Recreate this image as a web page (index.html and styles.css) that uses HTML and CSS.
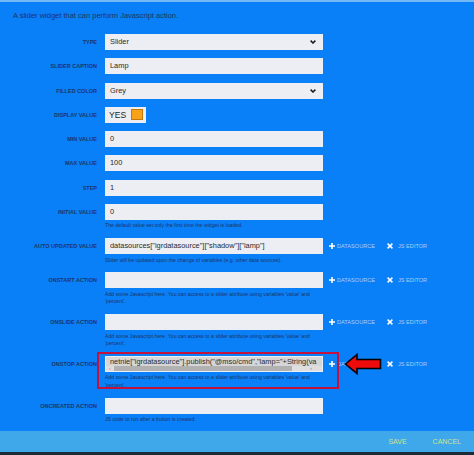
FILE: index.html
```html
<!DOCTYPE html>
<html>
<head>
<meta charset="utf-8">
<link rel="stylesheet" href="styles.css">
</head>
<body>
<div class="topline"></div>
<main class="panel">
  <p class="desc">A slider widget that can perform Javascript action.</p>

  <div class="row">
    <label class="lbl">TYPE</label>
    <div class="field select">Slider<svg class="chev" width="6" height="4" viewBox="0 0 6 4"><path d="M0.6 0.6L3 3L5.4 0.6" fill="none" stroke="#1a1a1a" stroke-width="1.5"/></svg></div>
  </div>
  <div class="row">
    <label class="lbl">SLIDER CAPTION</label>
    <div class="field">Lamp</div>
  </div>
  <div class="row">
    <label class="lbl">FILLED COLOR</label>
    <div class="field select">Grey<svg class="chev" width="6" height="4" viewBox="0 0 6 4"><path d="M0.6 0.6L3 3L5.4 0.6" fill="none" stroke="#1a1a1a" stroke-width="1.5"/></svg></div>
  </div>
  <div class="row">
    <label class="lbl">DISPLAY VALUE</label>
    <div class="toggle"><span class="yes">YES</span><span class="swatch"></span></div>
  </div>
  <div class="row">
    <label class="lbl">MIN VALUE</label>
    <div class="field">0</div>
  </div>
  <div class="row">
    <label class="lbl">MAX VALUE</label>
    <div class="field">100</div>
  </div>
  <div class="row">
    <label class="lbl">STEP</label>
    <div class="field">1</div>
  </div>
  <div class="row">
    <label class="lbl">INITIAL VALUE</label>
    <div class="field">0</div>
    <p class="help">The default value set only the first time the widget is loaded.</p>
  </div>
  <div class="row">
    <label class="lbl">AUTO UPDATED VALUE</label>
    <div class="field">datasources["igrdatasource"]["shadow"]["lamp"]</div>
    <div class="actions">
      <span class="act"><svg width="6" height="6" viewBox="0 0 6 6"><path d="M3 0V6M0 3H6" stroke="#fff" stroke-width="1.6"/></svg>DATASOURCE</span>
      <span class="act js"><svg width="6" height="6" viewBox="0 0 6 6"><path d="M0.6 0.6L5.4 5.4M5.4 0.6L0.6 5.4" stroke="#fff" stroke-width="1.5"/></svg>JS EDITOR</span>
    </div>
    <p class="help">Slider will be updated upon the change of variables (e.g. other data sources).</p>
  </div>
  <div class="row">
    <label class="lbl">ONSTART ACTION</label>
    <div class="field"></div>
    <div class="actions">
      <span class="act"><svg width="6" height="6" viewBox="0 0 6 6"><path d="M3 0V6M0 3H6" stroke="#fff" stroke-width="1.6"/></svg>DATASOURCE</span>
      <span class="act js"><svg width="6" height="6" viewBox="0 0 6 6"><path d="M0.6 0.6L5.4 5.4M5.4 0.6L0.6 5.4" stroke="#fff" stroke-width="1.5"/></svg>JS EDITOR</span>
    </div>
    <p class="help">Add some Javascript here. You can access to a slider attribute using variables 'value' and<br>'percent'.</p>
  </div>
  <div class="row">
    <label class="lbl">ONSLIDE ACTION</label>
    <div class="field"></div>
    <div class="actions">
      <span class="act"><svg width="6" height="6" viewBox="0 0 6 6"><path d="M3 0V6M0 3H6" stroke="#fff" stroke-width="1.6"/></svg>DATASOURCE</span>
      <span class="act js"><svg width="6" height="6" viewBox="0 0 6 6"><path d="M0.6 0.6L5.4 5.4M5.4 0.6L0.6 5.4" stroke="#fff" stroke-width="1.5"/></svg>JS EDITOR</span>
    </div>
    <p class="help">Add some Javascript here. You can access to a slider attribute using variables 'value' and<br>'percent'.</p>
  </div>
  <div class="row marked">
    <label class="lbl">ONSTOP ACTION</label>
    <div class="field code">
      <div class="codeline">netnie["igrdatasource"].publish("@mso/cmd","lamp="+String(va</div>
      <div class="hscroll"><span class="arr">&lsaquo;</span><span class="thumb"></span><span class="arr r">&rsaquo;</span></div>
    </div>
    <div class="actions">
      <span class="act"><svg width="6" height="6" viewBox="0 0 6 6"><path d="M3 0V6M0 3H6" stroke="#fff" stroke-width="1.6"/></svg>DATASOURCE</span>
      <span class="act js"><svg width="6" height="6" viewBox="0 0 6 6"><path d="M0.6 0.6L5.4 5.4M5.4 0.6L0.6 5.4" stroke="#fff" stroke-width="1.5"/></svg>JS EDITOR</span>
    </div>
    <p class="help">Add some Javascript here. You can access to a slider attribute using variables 'value' and<br>'percent'.</p>
    <div class="redbox"></div>
    <svg class="arrow" width="38" height="22" viewBox="0 0 38 22"><path d="M1.5 11L13 1.5V6.5H36.5V15.5H13V20.5Z" fill="#ee0b0b" stroke="#000" stroke-width="1.6" stroke-linejoin="miter"/></svg>
  </div>
  <div class="row">
    <label class="lbl">ONCREATED ACTION</label>
    <div class="field"></div>
    <p class="help">JS code to run after a button is created.</p>
  </div>
</main>
<footer class="footer">
  <span class="fbtn">SAVE</span>
  <span class="fbtn">CANCEL</span>
</footer>
<div class="taskbar"></div>
</body>
</html>
```

FILE: styles.css
```css
html, body {
  margin: 0;
  padding: 0;
}
body {
  width: 474px;
  height: 455px;
  overflow: hidden;
  background: #0a80f8;
  font-family: "Liberation Sans", Arial, sans-serif;
}
.topline {
  height: 2px;
  background: #72b8f6;
}
.panel {
  height: 429px;
  box-sizing: border-box;
  padding-top: 9px;
  background: #0a80f8;
}
.desc {
  margin: 0 0 13px 13px;
  font-size: 7.5px;
  line-height: 10px;
  color: #1c3566;
}
.row {
  display: grid;
  grid-template-columns: 97px 218px auto;
  column-gap: 8px;
  align-items: center;
  margin-bottom: 8.3px;
  position: relative;
}
.lbl {
  grid-column: 1;
  grid-row: 1;
  text-align: right;
  font-size: 5.5px;
  font-weight: bold;
  color: #1b3669;
  white-space: nowrap;
}
.field {
  grid-column: 2;
  grid-row: 1;
  height: 16px;
  box-sizing: border-box;
  background: #eceef4;
  font-size: 7.4px;
  line-height: 16px;
  padding-left: 5px;
  color: #2a2a2a;
  white-space: nowrap;
  overflow: hidden;
  position: relative;
}
.select .chev {
  position: absolute;
  right: 7px;
  top: 6px;
}
.toggle {
  grid-column: 2;
  grid-row: 1;
  justify-self: start;
  width: 41px;
  height: 16px;
  box-sizing: border-box;
  background: #eceef4;
  display: flex;
  align-items: center;
  padding-left: 4px;
  gap: 5px;
}
.yes {
  font-size: 8.6px;
  color: #1f1f1f;
}
.swatch {
  width: 12px;
  height: 11px;
  box-sizing: border-box;
  background: #f7a21a;
  border: 1px solid #c47a08;
}
.help {
  grid-column: 2 / 4;
  grid-row: 2;
  margin: 0;
  padding-top: 2.3px;
  font-size: 5.2px;
  line-height: 7.6px;
  color: #1d3567;
  white-space: nowrap;
}
.actions {
  grid-column: 3;
  grid-row: 1;
  display: flex;
  align-items: center;
  margin-left: -2px;
}
.act {
  display: flex;
  align-items: center;
  gap: 2px;
  font-size: 5.6px;
  color: #a9cdf2;
}
.act.js {
  margin-left: 12px;
  gap: 5px;
}
.field.code {
  background: #d2d2d2;
  border: 1px solid #e9edf5;
  padding: 0;
  line-height: normal;
}
.codeline {
  height: 9px;
  line-height: 9px;
  padding-left: 4px;
  font-size: 7.4px;
  color: #2b2b2b;
  background: #d6d6d6;
}
.hscroll {
  height: 5px;
  display: flex;
  align-items: center;
  background: #dedede;
  position: relative;
}
.hscroll .thumb {
  position: absolute;
  left: 8px;
  width: 178px;
  top: 0;
  bottom: 0;
  background: #b1b1b1;
}
.hscroll .arr {
  font-size: 6px;
  line-height: 5px;
  color: #e08080;
  padding-left: 3px;
  position: relative;
  z-index: 1;
}
.hscroll .arr.r {
  margin-left: auto;
  padding-right: 10px;
  color: #888;
}
.redbox {
  position: absolute;
  left: 97px;
  top: -4px;
  width: 242px;
  height: 37px;
  box-sizing: border-box;
  border: 2px solid #c4123e;
  pointer-events: none;
}
.arrow {
  position: absolute;
  left: 344px;
  top: -3px;
}
.footer {
  height: 21px;
  background: #3fa8ea;
  display: flex;
  justify-content: flex-end;
  align-items: center;
  gap: 26px;
  padding-right: 13px;
}
.fbtn {
  font-size: 7px;
  color: #d0e28a;
}
.taskbar {
  height: 3px;
  background: #1d2a36;
}
```
